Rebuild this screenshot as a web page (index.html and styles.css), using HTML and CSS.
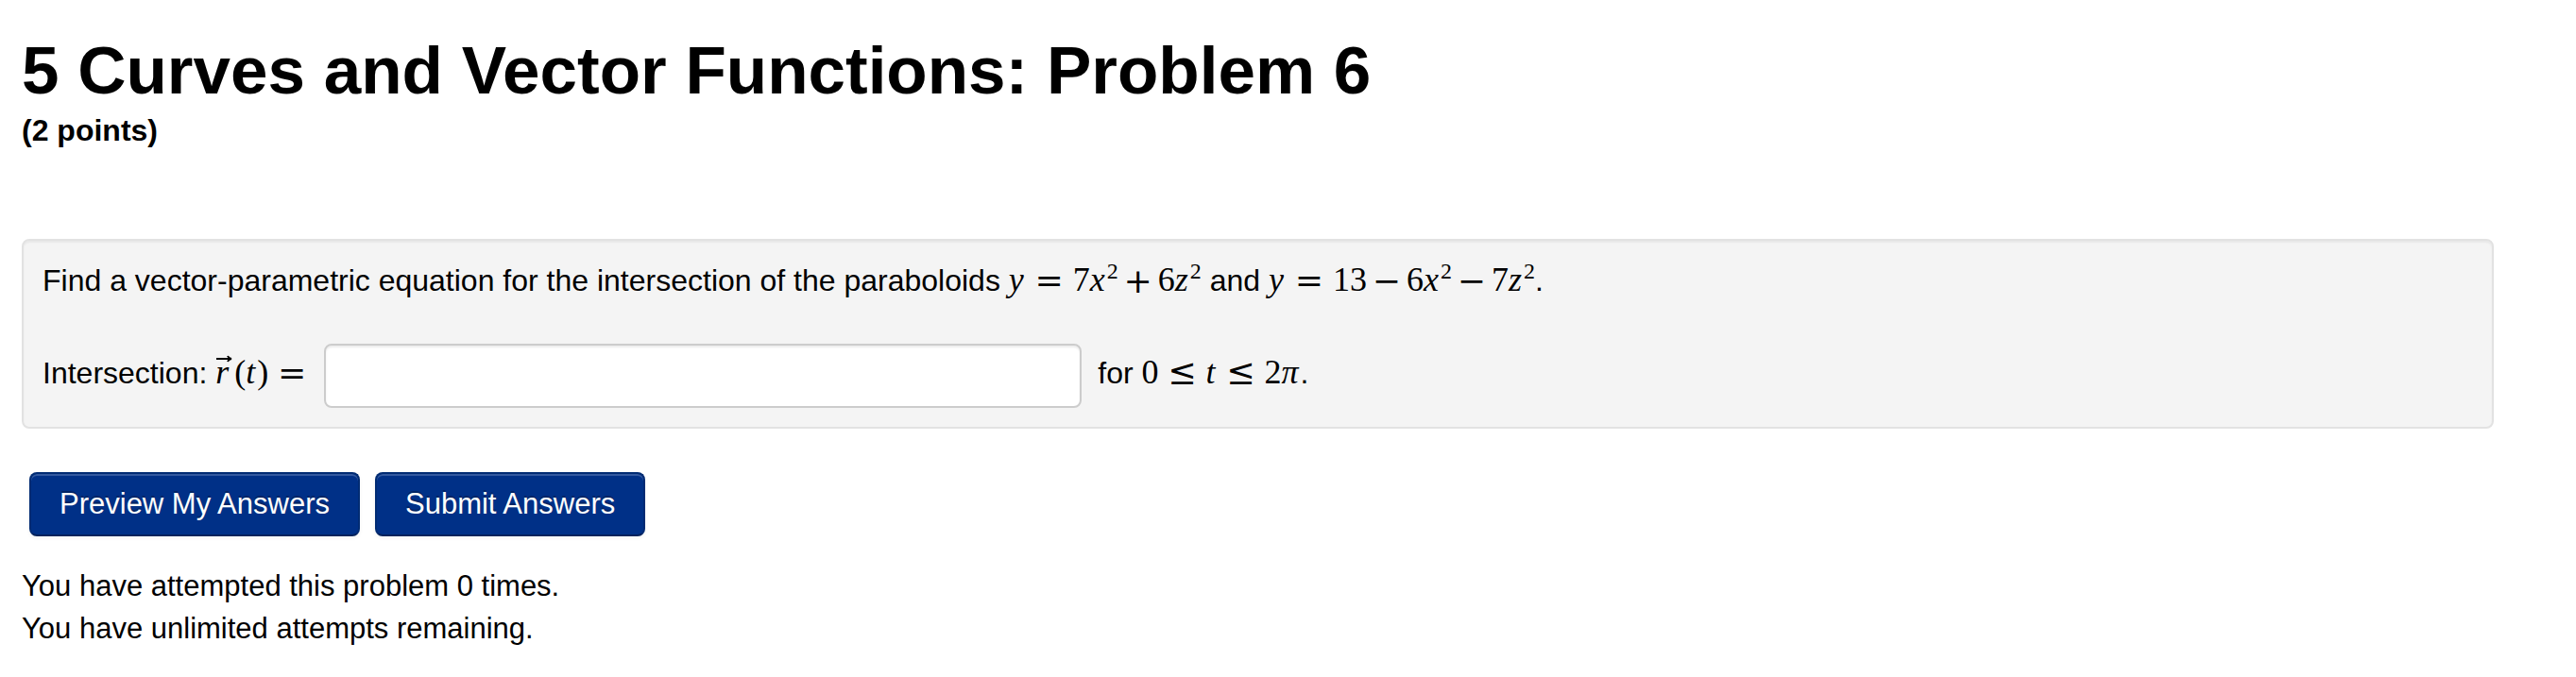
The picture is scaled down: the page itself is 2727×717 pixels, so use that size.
FILE: index.html
```
<!DOCTYPE html>
<html lang="en">
<head>
<meta charset="utf-8">
<title>5 Curves and Vector Functions: Problem 6</title>
<link rel="stylesheet" href="styles.css">
</head>
<body>
<main class="page">
  <h1 class="title">5 Curves and Vector Functions: Problem 6</h1>
  <p class="points">(2 points)</p>
  <form class="problem-form">
    <section class="problem">
      <p class="statement">Find a vector-parametric equation for the intersection of the paraboloids
        <span class="math"><i class="var">y</i><span class="rel">=</span>7<i class="var">x</i><sup>2</sup><span class="bin">+</span>6<i class="var">z</i><sup>2</sup></span> and
        <span class="math"><i class="var">y</i><span class="rel">=</span>13<span class="bin">−</span>6<i class="var">x</i><sup>2</sup><span class="bin">−</span>7<i class="var">z</i><sup>2</sup></span>.</p>
      <div class="answer-row">
        <label class="row-text" for="answer">Intersection: <span class="math"><span class="vector"><i class="var">r</i><svg class="arrow" viewBox="0 0 17 8" aria-hidden="true"><path d="M0 4H15M12 1Q13 3.500 16 4Q13 4.500 12 7"/></svg></span><span class="paren">(</span><i class="var">t</i><span class="paren">)</span><span class="rel">=</span></span></label>
        <input class="answer" id="answer" type="text">
        <span class="row-text range">for <span class="math">0<span class="rel">≤</span><i class="var">t</i><span class="rel">≤</span>2<i class="var">π</i></span>.</span>
      </div>
    </section>
    <div class="actions">
      <button class="button" type="button">Preview My Answers</button>
      <button class="button" type="button">Submit Answers</button>
    </div>
  </form>
  <p class="status">You have attempted this problem 0 times.<br>You have unlimited attempts remaining.</p>
</main>
</body>
</html>
```
FILE: styles.css
```
* { box-sizing: border-box; }
body {
  margin: 0;
  background: #fff;
  color: #000;
  font: 31px/45px "Liberation Sans", Arial, sans-serif;
}
p, h1 { margin: 0; }
.page { padding: 36px 87px 16px 23px; }
.title { font-size: 71px; line-height: 78px; }
.points { font-size: 32px; line-height: 48px; font-weight: bold; }
.problem {
  margin-top: 91px;
  padding: 20px;
  background: #f4f4f4;
  border: 2px solid #e2e2e2;
  border-radius: 8px;
  box-shadow: inset 0 2px 2px rgba(0, 0, 0, .05);
  font-size: 32px;
}
.answer-row {
  display: flex;
  align-items: center;
  margin-top: 44px;
}
.row-text { padding-bottom: 6px; }
.range { padding-left: 17px; }
.math { font-family: "Liberation Serif", "Times New Roman", serif; font-size: 36px; line-height: 1; white-space: nowrap; }
.var { padding-right: 2px; }
.rel, .bin {
  display: inline-block;
  width: 32px;
  margin: 0 9px;
  text-align: center;
  font-family: "DejaVu Math TeX Gyre", "DejaVu Serif", serif;
  font-size: 36px;
  line-height: 1;
}
.bin { margin: 0 5px; }
.math sup { font-size: 24px; line-height: 0; }
.vector { position: relative; padding-right: 4px; }
.arrow {
  position: absolute;
  left: 1px;
  top: 2px;
  width: 17px;
  height: 8px;
  fill: none;
  stroke: #000;
  stroke-width: 2;
}
.answer {
  width: 802px;
  height: 68px;
  margin-left: 9px;
  padding: 8px 12px;
  border: 2px solid #ccc;
  border-radius: 8px;
  background: #fff;
  box-shadow: inset 0 2px 2px rgba(0, 0, 0, .075);
  font: inherit;
}
.actions { display: flex; gap: 16px; margin: 46px 8px 30px; }
.button {
  height: 68px;
  padding: 0 30px 2px;
  border: 2px solid #002b73;
  border-bottom-color: #00225c;
  border-radius: 8px;
  background: #003087;
  color: #fff;
  font: inherit;
  text-shadow: 0 -2px 0 rgba(0, 0, 0, .25);
  box-shadow: inset 0 2px 0 rgba(255, 255, 255, .2), 0 2px 4px rgba(0, 0, 0, .05);
}
```
